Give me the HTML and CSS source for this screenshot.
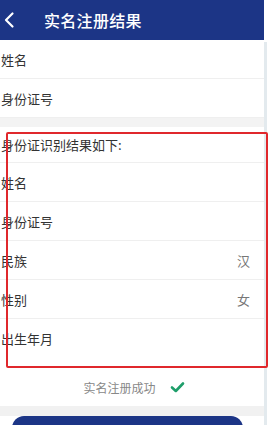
FILE: index.html
```html
<!DOCTYPE html>
<html lang="zh">
<head>
<meta charset="utf-8">
<link rel="stylesheet" href="styles.css">
</head>
<body>
<div class="screen">
  <div class="main">
    <header class="topbar">
      <svg class="back" width="12" height="18" viewBox="0 0 12 18"><path d="M9.5 2.5 L3 9 L9.5 15.5" fill="none" stroke="#fff" stroke-width="2.2" stroke-linecap="round" stroke-linejoin="round"/></svg>
      <h1 class="title">实名注册结果</h1>
    </header>
    <div class="group">
      <div class="row">姓名</div>
      <div class="row">身份证号</div>
    </div>
    <div class="gap"></div>
    <div class="group">
      <div class="row head">身份证识别结果如下:</div>
      <div class="row">姓名</div>
      <div class="row">身份证号</div>
      <div class="row"><span>民族</span><span class="val">汉</span></div>
      <div class="row"><span>性别</span><span class="val">女</span></div>
      <div class="row last">出生年月</div>
    </div>
    <div class="result">
      <span>实名注册成功</span>
      <svg class="check" width="15" height="12" viewBox="0 0 15 12"><path d="M2 6.5 L5.8 10 L13 2.5" fill="none" stroke="#1e9e6a" stroke-width="2.6" stroke-linecap="round" stroke-linejoin="round"/></svg>
    </div>
    <div class="gap2"></div>
    <div class="btn"></div>
  </div>
  <div class="rail"><div class="rail-line"></div></div>
  <div class="mark"></div>
</div>
</body>
</html>
```
FILE: styles.css
```css
html, body {
  margin: 0;
  padding: 0;
  background: #fff;
  overflow: hidden;
}
body {
  font-family: "Noto Sans CJK SC", "Noto Sans", sans-serif;
  color: #333;
}
.screen {
  position: relative;
  width: 270px;
  height: 425px;
  display: flex;
  overflow: hidden;
}
.main {
  width: 264px;
  display: flex;
  flex-direction: column;
}
.main > * {
  flex-shrink: 0;
}
.topbar {
  height: 40px;
  background: #1c3586;
  display: flex;
  align-items: center;
  box-shadow: 0 1px 2px rgba(0,0,0,0.15);
}
.back {
  margin-left: 3px;
}
.title {
  margin: 0 0 0 29px;
  font-size: 16px;
  font-weight: 500;
  color: #fff;
  letter-spacing: 0.3px;
}
.group {
  display: flex;
  flex-direction: column;
  background: #fff;
}
.row {
  flex-shrink: 0;
  height: 38px;
  border-bottom: 1px solid #efefef;
  display: flex;
  align-items: center;
  justify-content: space-between;
  padding: 0 14px 0 1px;
  font-size: 13px;
  color: #333;
}
.row.head {
  height: 35px;
}
.row.last {
  border-bottom: none;
  height: 39px;
}
.val {
  color: #777;
}
.gap {
  height: 9px;
  background: #f3f3f3;
}
.result {
  height: 48px;
  display: flex;
  align-items: flex-end;
  justify-content: center;
  gap: 14px;
  padding-bottom: 10px;
  box-sizing: border-box;
  font-size: 12px;
  color: #888;
  padding-left: 4px;
}
.check {
  margin-bottom: 3px;
}
.gap2 {
  height: 10px;
  background: #f1f1f1;
}
.btn {
  margin: 0 21px 0 12px;
  height: 30px;
  background: #1c3586;
  border-radius: 12px 12px 0 0;
}
.rail {
  flex: 1;
  background: #fff;
  display: flex;
  padding-top: 42px;
}
.rail-line {
  width: 3px;
  height: 383px;
  background: #e3eaee;
}
.mark {
  position: absolute;
  left: 6px;
  top: 132px;
  width: 258px;
  height: 232px;
  border: 2px solid #e0282c;
  border-radius: 2px;
}
```
